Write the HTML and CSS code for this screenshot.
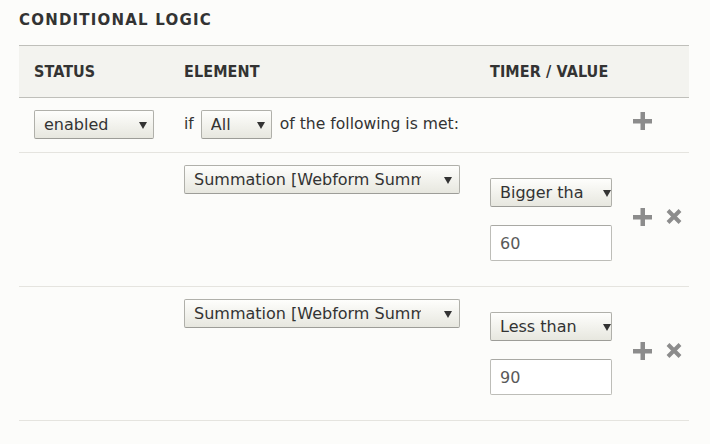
FILE: index.html
```html
<!DOCTYPE html>
<html>
<head>
<meta charset="utf-8">
<link rel="stylesheet" href="styles.css">
</head>
<body>
<div class="panel">
  <h2 class="title">Conditional Logic</h2>
  <table class="logic">
    <colgroup>
      <col class="c-status"><col class="c-element"><col class="c-timer"><col class="c-ops">
    </colgroup>
    <thead>
      <tr><th>Status</th><th>Element</th><th>Timer / Value</th><th></th></tr>
    </thead>
    <tbody>
      <tr class="row-first">
        <td><span class="sel w-status"><select><option>enabled</option></select></span></td>
        <td class="cond">if <span class="sel w-all"><select><option>All</option></select></span> of the following is met:</td>
        <td></td>
        <td class="ops">
          <span class="ico plus"><svg width="19" height="18" viewBox="0 0 19 18"><path d="M0 7h19v4.5H0zM7.5 0h4.5v18H7.5z" fill="#8c8c8c"/></svg></span>
        </td>
      </tr>
      <tr class="row-cond">
        <td></td>
        <td class="el"><span class="sel w-el"><select><option>Summation [Webform Summation]</option></select></span></td>
        <td class="timer">
          <span class="sel w-op"><select><option>Bigger than</option></select></span>
          <input class="val" type="text" value="60">
        </td>
        <td class="ops">
          <span class="ico plus"><svg width="19" height="18" viewBox="0 0 19 18"><path d="M0 7h19v4.5H0zM7.5 0h4.5v18H7.5z" fill="#8c8c8c"/></svg></span>
          <span class="ico cross"><svg width="16" height="15" viewBox="0 0 16 15"><path d="M2 1.5L14 13.5M14 1.5L2 13.5" stroke="#8c8c8c" stroke-width="4"/></svg></span>
        </td>
      </tr>
      <tr class="row-cond">
        <td></td>
        <td class="el"><span class="sel w-el"><select><option>Summation [Webform Summation]</option></select></span></td>
        <td class="timer">
          <span class="sel w-op"><select><option>Less than</option></select></span>
          <input class="val" type="text" value="90">
        </td>
        <td class="ops">
          <span class="ico plus"><svg width="19" height="18" viewBox="0 0 19 18"><path d="M0 7h19v4.5H0zM7.5 0h4.5v18H7.5z" fill="#8c8c8c"/></svg></span>
          <span class="ico cross"><svg width="16" height="15" viewBox="0 0 16 15"><path d="M2 1.5L14 13.5M14 1.5L2 13.5" stroke="#8c8c8c" stroke-width="4"/></svg></span>
        </td>
      </tr>
    </tbody>
  </table>
</div>
</body>
</html>
```
FILE: styles.css
```css
html, body {
  margin: 0;
  padding: 0;
  background: #fcfcfa;
}
body {
  font-family: "DejaVu Sans", sans-serif;
  color: #333;
}
.panel {
  padding: 11px 21px 0 19px;
}
.title {
  margin: 0;
  font-size: 15px;
  line-height: 18px;
  font-weight: bold;
  text-transform: uppercase;
  letter-spacing: 1.2px;
  color: #333;
}
.logic {
  margin-top: 16px;
  width: 670px;
  table-layout: fixed;
  border-collapse: separate;
  border-spacing: 0;
}
.c-status { width: 150px; }
.c-element { width: 306px; }
.c-timer { width: 143px; }
.c-ops { width: 71px; }

.logic th {
  background: #f3f3ef;
  border-top: 1px solid #bfbfba;
  border-bottom: 1px solid #bfbfba;
  padding: 16px 15px 16px;
  text-align: left;
  font-family: "DejaVu Sans Condensed", "DejaVu Sans", sans-serif;
  font-stretch: condensed;
  font-size: 16px;
  line-height: 19px;
  font-weight: bold;
  text-transform: uppercase;
  letter-spacing: 0.1px;
  color: #333;
  white-space: nowrap;
}
.logic td {
  border-bottom: 1px solid #e5e4df;
  padding: 12px 15px 13px;
  vertical-align: middle;
  font-size: 16px;
  line-height: 20px;
}
.cond {
  white-space: nowrap;
  color: #333;
  font-size: 15.6px !important;
}
.row-cond td.el {
  vertical-align: top;
  padding-top: 12px;
}
.row-cond td.timer {
  padding-top: 25px;
  padding-bottom: 25px;
  padding-right: 0;
}
.timer .sel {
  display: block;
  margin-bottom: 18px;
}
.ops {
  padding-bottom: 19px !important;
  white-space: nowrap;
}
.ico {
  display: inline-block;
  vertical-align: middle;
  line-height: 0;
}
.ico.cross {
  margin-left: 9px;
}
.row-first .ops {
  padding-bottom: 21px !important;
}

.sel {
  position: relative;
  display: inline-block;
  vertical-align: middle;
}
.sel select {
  appearance: none;
  -webkit-appearance: none;
  box-sizing: border-box;
  height: 29px;
  margin: 0;
  border: 1px solid #b0b0aa;
  border-bottom-color: #9d9d98;
  border-radius: 2px;
  background: linear-gradient(#fefefc, #e7e7df);
  font-family: "DejaVu Sans", sans-serif;
  font-size: 16px;
  color: #333;
  padding: 0 28px 0 9px;
  outline: none;
}
.sel::after {
  content: "";
  position: absolute;
  top: 12px;
  right: 7px;
  border-left: 4.5px solid transparent;
  border-right: 4.5px solid transparent;
  border-top: 7px solid #333;
  pointer-events: none;
}
.w-status select { width: 120px; }
.w-all select { width: 71px; }
.w-el select { width: 276px; padding-right: 38px; }
.w-el::after { right: 8px; }
.w-op select { width: 122px; padding-right: 27px; }
.w-all { margin: 0 3px 0 2px; }

.val {
  box-sizing: border-box;
  display: block;
  width: 122px;
  height: 36px;
  margin: 0;
  border: 1px solid #bdbdb8;
  border-top-color: #a9a9a4;
  border-radius: 2px;
  background: #fff;
  font-family: "DejaVu Sans", sans-serif;
  font-size: 16px;
  color: #595959;
  padding: 0 9px;
}
```
